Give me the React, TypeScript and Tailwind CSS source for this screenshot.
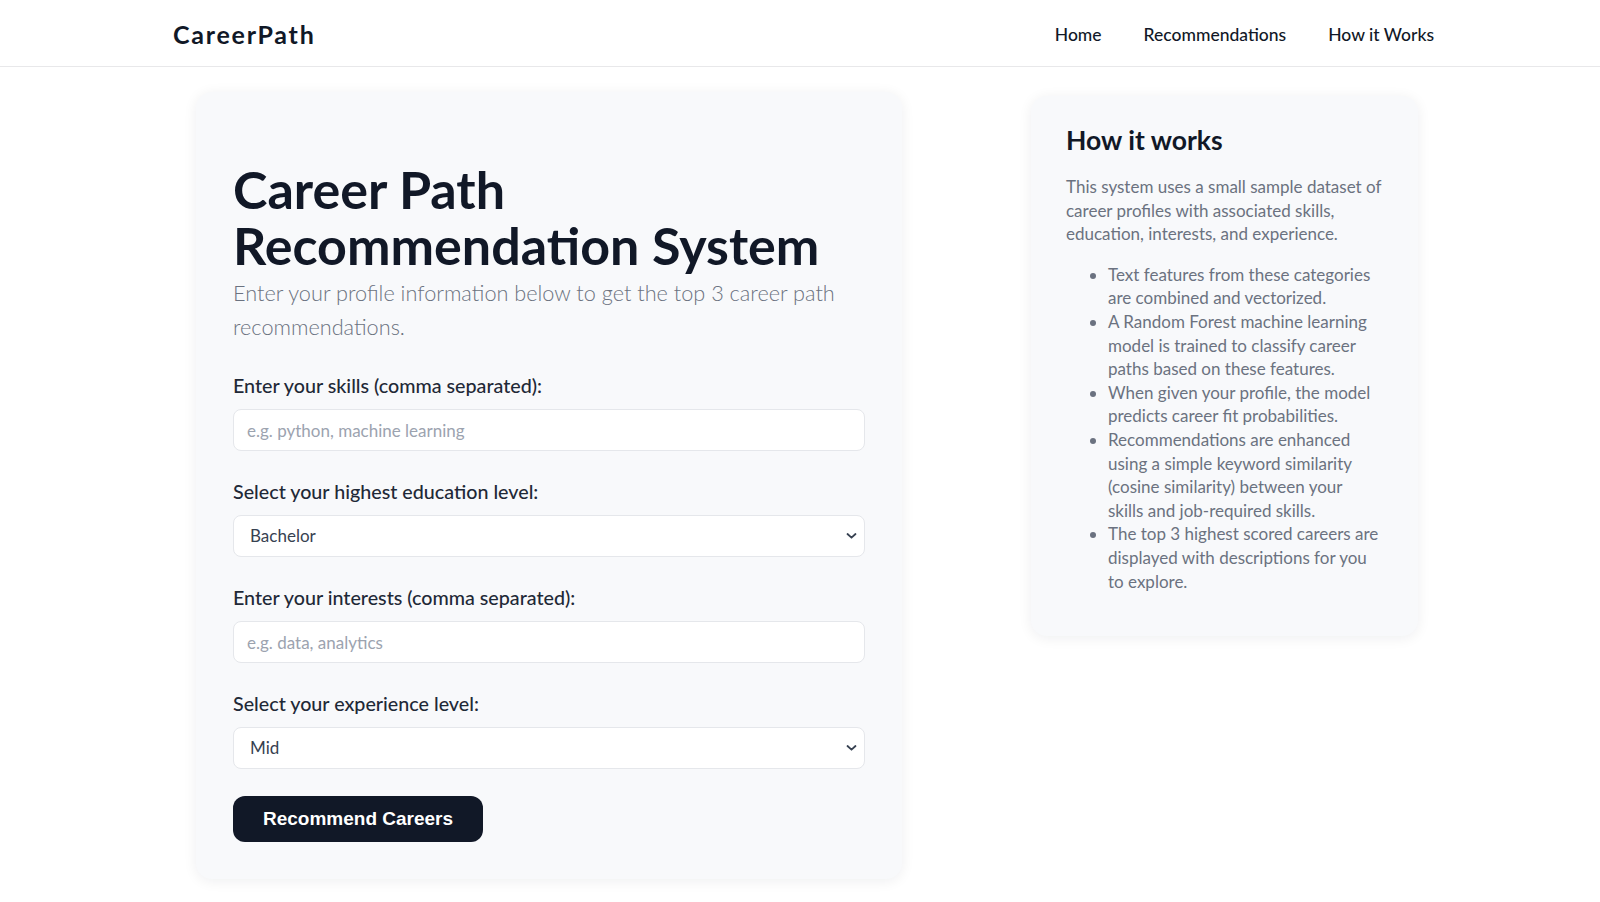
import React from "react";

function Chevron() {
  return (
    <svg
      className="pointer-events-none absolute right-[8px] top-1/2 -translate-y-1/2"
      width="11"
      height="7"
      viewBox="0 0 11 7"
      fill="none"
    >
      <path d="M1.5 1.5L5.5 5.2L9.5 1.5" stroke="#374151" strokeWidth="1.8" strokeLinecap="round" strokeLinejoin="round" />
    </svg>
  );
}

function Field({ label, children }: { label: string; children: React.ReactNode }) {
  return (
    <div className="mb-[27px]">
      <label className="mb-[10px] block text-[19.7px] font-medium leading-[27px] text-[#1f2937]">{label}</label>
      {children}
    </div>
  );
}

export default function App() {
  const inputCls =
    "h-[42px] w-full rounded-[8px] border border-[#e5e7eb] bg-white px-[13px] text-[17px] text-[#374151] outline-none placeholder:text-[#9ca3af]";
  const selectCls =
    "h-[42px] w-full appearance-none rounded-[8px] border border-[#e5e7eb] bg-white pl-[16px] pr-[30px] text-[17px] text-[#374151] outline-none";
  return (
    <div className="min-h-screen bg-white font-['Lato','Noto_Sans',sans-serif]">
      <header className="h-[67px] border-b border-[#e8e8ea] bg-white">
        <div className="flex h-full items-center justify-between pl-[173px] pr-[166px] pt-[3px]">
          <div className="text-[25px] font-bold tracking-[0.07em] text-[#111827]">CareerPath</div>
          <nav className="flex items-center gap-[42px] pt-[1px] text-[17.5px] font-medium text-[#111827]">
            <a href="#">Home</a>
            <a href="#">Recommendations</a>
            <a href="#">How it Works</a>
          </nav>
        </div>
      </header>

      <main className="flex items-start gap-[129px] pl-[196px] pt-[25px]">
        <section className="w-[706px] rounded-[16px] bg-[#f8f9fb] px-[37px] pb-[37px] pt-[69px] shadow-[0_2px_14px_rgba(15,23,42,0.07)]">
          <h1 className="text-[52px] font-bold leading-[56px] text-[#111827]">
            Career Path
            <br />
            Recommendation System
          </h1>
          <p className="mt-[3px] text-[21.7px] font-light leading-[34px] text-[#6b7280]">
            Enter your profile information below to get the top 3 career path
            <br />
            recommendations.
          </p>
          <form className="mt-[28px]" onSubmit={(e) => e.preventDefault()}>
            <Field label="Enter your skills (comma separated):">
              <input className={inputCls} placeholder="e.g. python, machine learning" />
            </Field>
            <Field label="Select your highest education level:">
              <div className="relative">
                <select className={selectCls} defaultValue="Bachelor">
                  <option>High School</option>
                  <option>Bachelor</option>
                  <option>Master</option>
                  <option>PhD</option>
                </select>
                <Chevron />
              </div>
            </Field>
            <Field label="Enter your interests (comma separated):">
              <input className={inputCls} placeholder="e.g. data, analytics" />
            </Field>
            <Field label="Select your experience level:">
              <div className="relative">
                <select className={selectCls} defaultValue="Mid">
                  <option>Entry</option>
                  <option>Mid</option>
                  <option>Senior</option>
                </select>
                <Chevron />
              </div>
            </Field>
            <button
              type="submit"
              className="h-[46px] rounded-[12px] bg-[#111827] px-[30px] font-['Liberation_Sans',Arial,sans-serif] text-[19px] font-bold text-white"
            >
              Recommend Careers
            </button>
          </form>
        </section>

        <aside className="mt-[4px] w-[387px] rounded-[16px] bg-[#f8f9fb] pb-[43px] pl-[35px] pr-[20px] pt-[28px] shadow-[0_2px_14px_rgba(15,23,42,0.07)]">
          <h2 className="text-[26.5px] font-bold leading-[32px] text-[#111827]">How it works</h2>
          <p className="mt-[19px] whitespace-nowrap text-[17px] leading-[23.6px] text-[#6b7280]">
            This system uses a small sample dataset of
            <br />
            career profiles with associated skills,
            <br />
            education, interests, and experience.
          </p>
          <ul className="mt-[17px] list-disc whitespace-nowrap pl-[42px] text-[17px] leading-[23.6px] text-[#6b7280]">
            <li>
              Text features from these categories
              <br />
              are combined and vectorized.
            </li>
            <li>
              A Random Forest machine learning
              <br />
              model is trained to classify career
              <br />
              paths based on these features.
            </li>
            <li>
              When given your profile, the model
              <br />
              predicts career fit probabilities.
            </li>
            <li>
              Recommendations are enhanced
              <br />
              using a simple keyword similarity
              <br />
              (cosine similarity) between your
              <br />
              skills and job-required skills.
            </li>
            <li>
              The top 3 highest scored careers are
              <br />
              displayed with descriptions for you
              <br />
              to explore.
            </li>
          </ul>
        </aside>
      </main>
    </div>
  );
}
